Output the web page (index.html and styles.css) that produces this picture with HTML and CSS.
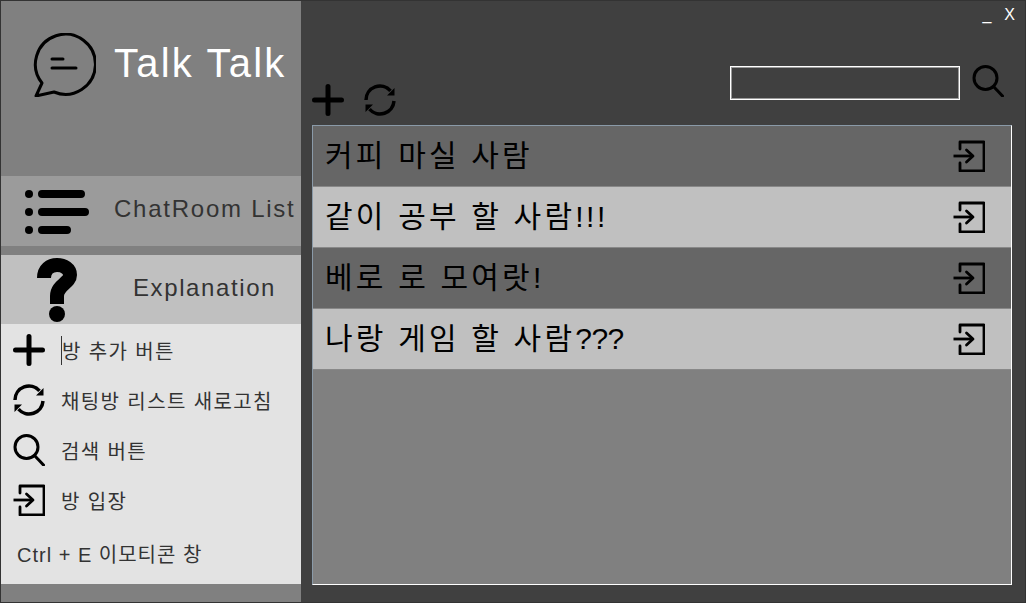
FILE: index.html
```html
<!DOCTYPE html>
<html lang="ko">
<head>
<meta charset="utf-8">
<title>Talk Talk</title>
<link rel="stylesheet" href="styles.css">
</head>
<body>
<svg class="defs" width="0" height="0" aria-hidden="true">
  <symbol id="i-plus" viewBox="0 0 32 32"><path d="M16 2.500V29.500M2.500 16H29.500" fill="none" stroke="currentColor" stroke-width="5" stroke-linecap="round"/></symbol>
  <symbol id="i-refresh" viewBox="0 0 32 32"><g fill="none" stroke="currentColor" stroke-width="3.500"><path d="M2 16A14 14 0 0 1 26.500 6.800"/><path d="M30 17A14 14 0 0 1 5.500 25.200"/></g><path d="M30.500 4V11.500H23ZM1.500 28V20.500H9Z" fill="currentColor"/></symbol>
  <symbol id="i-search" viewBox="0 0 32 32"><g fill="none" stroke="currentColor" stroke-width="3"><circle cx="13.500" cy="13" r="11.500"/><path d="M21.500 21.500L30.500 31" stroke-linecap="round"/></g></symbol>
  <symbol id="i-enter" viewBox="0 0 32 32"><g fill="none" stroke="currentColor" stroke-width="2.800" stroke-linecap="round" stroke-linejoin="round"><path d="M7 9V2H31V31H7V23"/></g><g fill="none" stroke="currentColor" stroke-width="2.800" stroke-linejoin="round"><path d="M0.500 16H20"/><path d="M13.500 10L20 16L13.500 22" stroke-linecap="round"/></g></symbol>
</svg>
<div class="window">
  <aside class="sidebar">
    <div class="brand">
      <svg class="brand-icon" viewBox="0 0 64 64"><g fill="none" stroke="#000" stroke-width="3" stroke-linecap="round" stroke-linejoin="round"><path d="M10 50A30 30 0 1 1 22 59L4 63Z"/><path d="M20 26H31M20 35H44"/></g></svg>
      <h1 class="brand-title">Talk Talk</h1>
    </div>
    <div class="nav nav-list">
      <svg class="nav-list-icon" viewBox="0 0 65 45"><g fill="#000"><circle cx="4" cy="5" r="4"/><circle cx="4" cy="23" r="4"/><circle cx="4" cy="41" r="4"/></g><g stroke="#000" stroke-width="8" stroke-linecap="round"><path d="M17 5H56M17 23H60M17 41H42"/></g></svg>
      <span class="nav-label">ChatRoom List</span>
    </div>
    <div class="nav nav-help">
      <svg class="nav-help-icon" viewBox="0 0 40 64"><path d="M7 20C7 11 13 7 20 7C27 7 33 11 33 17C33 25 20 27 20 38V46" fill="none" stroke="#000" stroke-width="14"/><circle cx="20" cy="56" r="8" fill="#000"/></svg>
      <span class="nav-label">Explanation</span>
    </div>
    <div class="help">
      <div class="help-row"><svg class="help-icon"><use href="#i-plus"/></svg><span class="help-text caret">방 추가 버튼</span></div>
      <div class="help-row"><svg class="help-icon"><use href="#i-refresh"/></svg><span class="help-text">채팅방 리스트 새로고침</span></div>
      <div class="help-row"><svg class="help-icon"><use href="#i-search"/></svg><span class="help-text">검색 버튼</span></div>
      <div class="help-row"><svg class="help-icon"><use href="#i-enter"/></svg><span class="help-text">방 입장</span></div>
      <div class="help-row help-shortcut"><span class="help-text">Ctrl + E 이모티콘 창</span></div>
    </div>
  </aside>
  <main class="main">
    <div class="controls"><span class="ctl">_</span><span class="ctl">X</span></div>
    <div class="toolbar">
      <svg class="tool"><use href="#i-plus"/></svg>
      <svg class="tool tool-refresh"><use href="#i-refresh"/></svg>
      <div class="search">
        <input class="search-input" type="text">
        <svg class="tool search-btn"><use href="#i-search"/></svg>
      </div>
    </div>
    <section class="rooms">
      <div class="room room-dark"><span class="room-name">커피 마실 사람</span><svg class="room-enter"><use href="#i-enter"/></svg></div>
      <div class="room room-light"><span class="room-name">같이 공부 할 사람<span class="bang">!!!</span></span><svg class="room-enter"><use href="#i-enter"/></svg></div>
      <div class="room room-dark"><span class="room-name">베로 로 모여랏<span class="bang">!</span></span><svg class="room-enter"><use href="#i-enter"/></svg></div>
      <div class="room room-light"><span class="room-name">나랑 게임 할 사람<span class="tight">???</span></span><svg class="room-enter"><use href="#i-enter"/></svg></div>
    </section>
  </main>
</div>
</body>
</html>
```
FILE: styles.css
```css
* { box-sizing: border-box; margin: 0; padding: 0; }
html, body { width: 1026px; height: 603px; overflow: hidden; }
body { font-family: "Liberation Sans", "Noto Sans CJK KR", sans-serif; background: #404040; }
.defs { display: block; width: 0; height: 0; }
.window { display: flex; width: 1026px; height: 603px; border: 1px solid #333; background: #404040; }
.sidebar { display: flex; flex-direction: column; width: 300px; flex: none; background: #808080; padding-bottom: 18px; }
.brand { display: flex; align-items: flex-start; flex: none; height: 175px; padding: 32px 0 0 31px; }
.brand-icon { width: 64px; height: 64px; flex: none; }
.brand-title { margin: 7px 0 0 18px; font-size: 40px; line-height: 46px; font-weight: 400; letter-spacing: 2.2px; color: #fff; white-space: nowrap; }
.nav { display: flex; align-items: center; flex: none; color: #333; }
.nav-list { height: 70px; background: #9b9b9b; margin-bottom: 9px; padding-left: 24px; }
.nav-list-icon { width: 65px; height: 45px; flex: none; }
.nav-help { height: 69px; background: #c0c0c0; padding-left: 36px; }
.nav-help-icon { width: 40px; height: 64px; flex: none; }
.nav-label { font-size: 24px; letter-spacing: 1.75px; white-space: nowrap; margin-bottom: 4px; }
.nav-list .nav-label { margin-left: 24px; }
.nav-help .nav-label { margin-left: 56px; letter-spacing: 1.6px; }
.help { flex: 1; display: flex; flex-direction: column; background: #e3e3e3; padding-top: 1px; }
.help-row { display: flex; align-items: center; height: 50px; padding-left: 12px; }
.help-icon { width: 32px; height: 32px; flex: none; color: #000; }
.help-text { margin-left: 16px; font-size: 20px; letter-spacing: 1.4px; color: #333; white-space: nowrap; }
.caret { border-left: 1px solid #333; }
.help-shortcut { height: 56px; padding-left: 0; }
.help-shortcut .help-text { letter-spacing: 1px; }
.main { flex: 1; display: flex; flex-direction: column; padding: 0 13px 17px 11px; }
.controls { display: flex; justify-content: flex-end; gap: 13px; height: 29px; padding: 5px 0 0; margin-right: -3px; color: #fff; font-size: 16px; line-height: 18px; }
.toolbar { display: flex; align-items: flex-end; flex: none; height: 95px; padding-bottom: 9px; }
.tool { width: 32px; height: 32px; flex: none; color: #000; }
.tool-refresh { margin-left: 20px; }
.search { display: flex; align-items: flex-start; gap: 12px; margin-left: auto; margin-right: 8px; margin-bottom: 16px; }
.search-input { width: 230px; height: 34px; margin-top: 1px; background: #404040; border: 1px solid #fff; box-shadow: inset 0 0 0 1px #9a9a9a; outline: none; }
.rooms { flex: 1; background: #808080; border: 1px solid #fff; border-top-color: #8a9aa8; border-left-color: #8a9aa8; }
.room { display: flex; align-items: center; justify-content: space-between; height: 61px; padding: 0 26px 0 12px; border-bottom: 1px solid #888; color: #000; }
.room-dark { background: #666; }
.room-light { background: #c0c0c0; }
.room-name { font-size: 30px; letter-spacing: 3.2px; white-space: nowrap; margin-bottom: 6px; }
.bang { letter-spacing: 2.500px; }
.tight { letter-spacing: -0.5px; }
.room-enter { width: 32px; height: 32px; flex: none; color: #000; }
```
